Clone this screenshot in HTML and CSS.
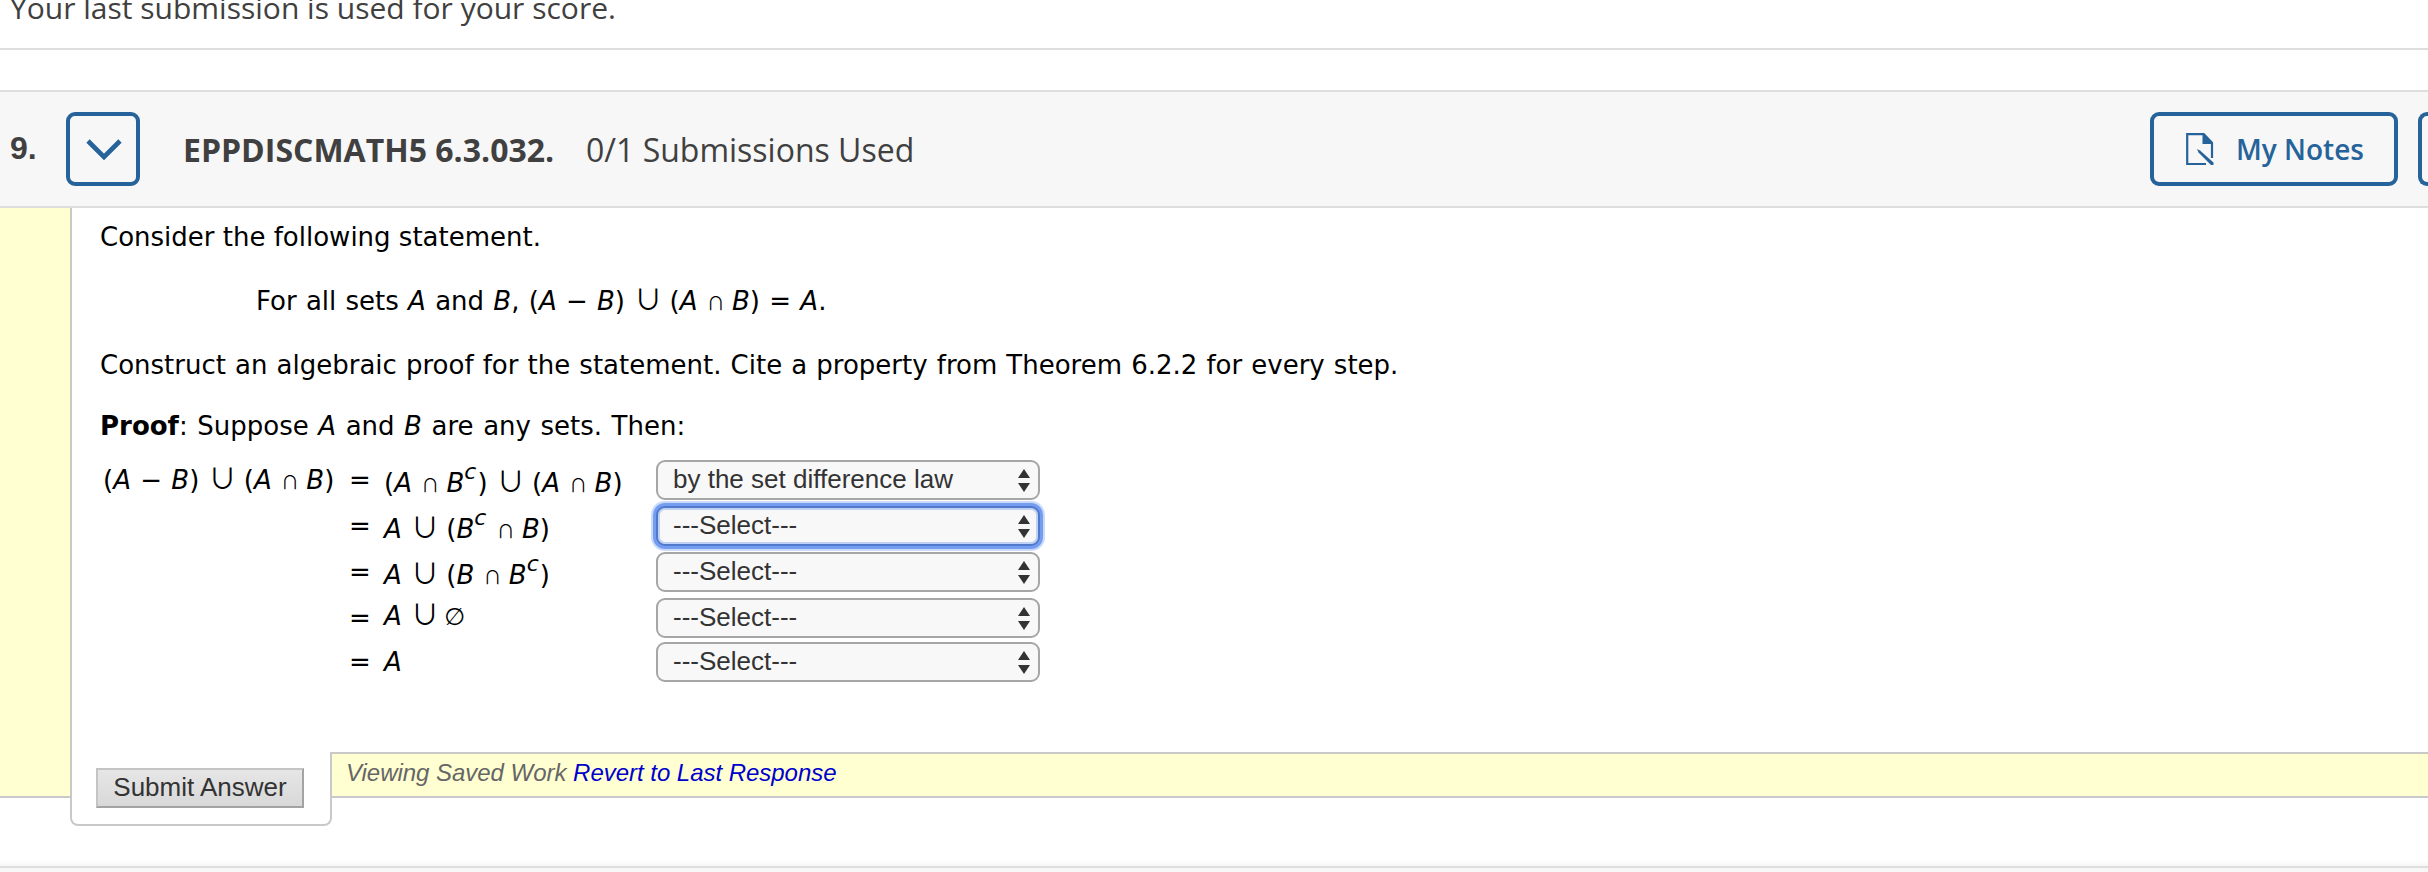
FILE: index.html
```html
<!DOCTYPE html>
<html lang="en">
<head>
  <meta charset="UTF-8">
  <title>Assignment</title>
  <link rel="stylesheet" href="styles.css">
</head>
<body>

  <div class="notice">Your last submission is used for your score.</div>

  <!-- Question header -->
  <header class="question-header">
    <span class="number">9.</span>
    <button class="toggle" aria-label="Collapse">
      <svg width="36" height="22" viewBox="0 0 36 22"><path d="M2 2 L18 18 L34 2" fill="none" stroke="#25639a" stroke-width="4.6"/></svg>
    </button>
    <span class="code">EPPDISCMATH5 6.3.032.</span>
    <span class="used">0/1 Submissions Used</span>
    <div class="actions">
      <button class="notes">
        <svg width="28" height="32" viewBox="0 0 28 32">
          <path d="M20 31 H1.2 V1.2 H17.5 L26 10 V25" fill="none" stroke="#25639a" stroke-width="2.2"/>
          <path d="M16.5 1 V11 H27 V9.5 L18 0Z" fill="#25639a"/>
          <path d="M11 16 L14 17.5 L27.5 29.5 V32 H25 L12.5 19.5Z" fill="#25639a"/>
        </svg>
        <span class="notes-text">My Notes</span>
      </button>
      <button class="next" aria-label="Ask your teacher"></button>
    </div>
  </header>

  <!-- Question body -->
  <main class="question">
    <div class="gutter"></div>
    <div class="content">
      <p class="line l1">Consider the following statement.</p>
      <p class="line l2">For all sets <i>A</i> and <i>B</i>, (<i>A</i> − <i>B</i>) <b class="cup">∪</b> (<i>A</i> <b class="cap">∩</b> <i>B</i>) = <i>A</i>.</p>
      <p class="line l3">Construct an algebraic proof for the statement. Cite a property from Theorem 6.2.2 for every step.</p>
      <p class="line l4"><strong>Proof</strong>: Suppose <i>A</i> and <i>B</i> are any sets. Then:</p>

      <div class="proof">
        <div class="lhs">(<i>A</i> − <i>B</i>) <b class="cup">∪</b> (<i>A</i> <b class="cap">∩</b> <i>B</i>)</div>
        <div class="eq">=</div>
        <div class="rhs sup">(<i>A</i> <b class="cap">∩</b> <i>B<sup>c</sup></i>) <b class="cup">∪</b> (<i>A</i> <b class="cap">∩</b> <i>B</i>)</div>
        <div class="select">by the set difference law<span class="arrows"></span></div>

        <div class="lhs"></div>
        <div class="eq">=</div>
        <div class="rhs sup"><i>A</i> <b class="cup">∪</b> (<i>B<sup>c</sup></i> <b class="cap">∩</b> <i>B</i>)</div>
        <div class="select focused">---Select---<span class="arrows"></span></div>

        <div class="lhs"></div>
        <div class="eq">=</div>
        <div class="rhs sup"><i>A</i> <b class="cup">∪</b> (<i>B</i> <b class="cap">∩</b> <i>B<sup>c</sup></i>)</div>
        <div class="select">---Select---<span class="arrows"></span></div>

        <div class="lhs"></div>
        <div class="eq">=</div>
        <div class="rhs empty"><i>A</i> <b class="cup">∪</b> <span class="null">∅</span></div>
        <div class="select">---Select---<span class="arrows"></span></div>

        <div class="lhs"></div>
        <div class="eq">=</div>
        <div class="rhs"><i>A</i></div>
        <div class="select">---Select---<span class="arrows"></span></div>
      </div>
    </div>
  </main>

  <!-- Submit tab and saved work strip -->
  <div class="bottom">
    <div class="gutter-end"></div>
    <div class="submit-tab"><button class="submit">Submit Answer</button></div>
    <div class="saved">Viewing Saved Work <a>Revert to Last Response</a></div>
  </div>

  <div class="next-question"></div>

</body>
</html>
```
FILE: styles.css
```css
* {
  box-sizing: border-box;
}

body {
  margin: 0;
  height: 872px;
  overflow: hidden;
  background: #fff;
  color: #000;
  font-family: "DejaVu Sans", sans-serif;
  font-size: 26px;
}

button {
  margin: 0;
  padding: 0;
  background: transparent;
  font-family: inherit;
}

.notice {
  height: 50px;
  border-bottom: 2px solid #dedede;
  padding-left: 10px;
  color: #404040;
  font: 30px/15px "Open Sans", sans-serif;
  white-space: nowrap;
}

/* header */
.question-header {
  display: flex;
  align-items: flex-start;
  height: 118px;
  margin-top: 40px;
  padding-top: 20px;
  border-top: 2px solid #dedede;
  border-bottom: 2px solid #dedede;
  background: #f7f7f7;
  color: #404040;
  font: 32px/75px "Open Sans", sans-serif;
  white-space: nowrap;
}

.number {
  width: 56px;
  margin-left: 10px;
  font-family: "Liberation Sans", sans-serif;
  font-weight: bold;
  line-height: 73px;
}

.toggle,
.notes,
.next {
  height: 74px;
  border: 4px solid #25639a;
  border-radius: 9px;
  color: #25639a;
}

.toggle {
  display: flex;
  align-items: center;
  justify-content: center;
  width: 74px;
}

.toggle svg {
  position: relative;
  left: 1px;
  top: 1px;
}

.code {
  width: 403px;
  margin-left: 43px;
  font-weight: bold;
}

.actions {
  display: flex;
  gap: 20px;
  margin-left: auto;
}

.notes {
  display: flex;
  align-items: center;
  width: 248px;
  padding-left: 32px;
  font: 600 28px/60px "Open Sans", sans-serif;
}

.notes-text {
  margin-left: 22px;
}

/* runs off the right side of the page */
.next {
  width: 10px;
  border-right: 0;
  border-radius: 9px 0 0 9px;
}

/* body */
.question {
  display: flex;
  height: 544px;
}

.gutter {
  width: 70px;
  background: #ffffd2;
}

.content {
  flex: 1;
  padding: 13px 0 0 28px;
  border-left: 2px solid #c9c9c9;
  white-space: nowrap;
  word-spacing: 1px;
}

.line {
  height: 32px;
  margin: 0;
  line-height: 32px;
}

.l1 {
  word-spacing: 0;
}

.l2 {
  margin: 32px 0 32px 156px;
}

.l3 {
  word-spacing: 0.85px;
}

.l4 {
  margin-top: 29px;
  word-spacing: 1.3px;
}

.cup,
.cap {
  display: inline-block;
  font-family: "Noto Sans CJK SC", sans-serif;
  font-weight: 400;
  line-height: 0;
  text-align: center;
}

.cup {
  width: 26px;
  font-size: 28px;
}

.cap {
  width: 16px;
  font-size: 18px;
}

/* proof table */
.proof {
  display: grid;
  grid-template-columns: 249px 35px 272px 384px;
  grid-template-rows: 46px 46px 46px 44px 40px;
  margin-top: 18px;
  line-height: 41px;
}

.lhs {
  padding-left: 3px;
}

.sup {
  padding-top: 3px;
}

.empty {
  margin-top: -2px;
}

.null {
  margin-left: -2px;
  font-size: 24px;
  line-height: 0;
}

sup {
  margin: 0 1px 0 0;
  font-size: 22px;
  line-height: 0;
  vertical-align: 13px;
}

.select {
  display: flex;
  justify-content: space-between;
  height: 40px;
  padding: 0 8px 0 15px;
  border: 2px solid #a6a6a6;
  border-radius: 9px;
  background: #f8f8f8;
  color: #333;
  font: 26px/34px "Liberation Sans", sans-serif;
  word-spacing: 0;
}

.focused {
  border-color: #5079cc;
  box-shadow: 0 0 0 3px #749df0, 0 0 0 5px #c9dafa, inset 0 0 0 2px #bfd2f5;
}

.arrows {
  display: flex;
  flex-direction: column;
  gap: 5px;
  padding-top: 7px;
}

.arrows::before,
.arrows::after {
  content: "";
  border: 6px solid transparent;
}

.arrows::before {
  border-top: 0;
  border-bottom: 9px solid #333;
}

.arrows::after {
  border-bottom: 0;
  border-top: 9px solid #333;
}

/* submit area */
.bottom {
  display: flex;
  height: 74px;
}

.gutter-end {
  width: 70px;
  height: 46px;
  border-bottom: 2px solid #c9c9c9;
  background: #ffffd2;
}

.submit-tab {
  width: 262px;
  padding: 16px 0 0 24px;
  border: 2px solid #c9c9c9;
  border-top: 0;
  border-radius: 0 0 8px 8px;
}

.submit {
  display: block;
  width: 208px;
  height: 40px;
  padding-bottom: 2px;
  border: 2px solid;
  border-color: #c4c4c4 #a3a3a3 #a3a3a3 #c4c4c4;
  background: linear-gradient(#e6e6e6, #d8d8d8);
  color: #333;
  font: 26px/34px "Liberation Sans", sans-serif;
}

.saved {
  flex: 1;
  height: 46px;
  margin-left: -2px;
  padding-left: 14px;
  border: 2px solid #c9c9c9;
  border-right: 0;
  background: #ffffd2;
  color: #666;
  font: italic 24px/38px "Liberation Sans", sans-serif;
  letter-spacing: -0.03px;
}

.saved a {
  color: #0000cc;
}

.next-question {
  height: 46px;
  background: linear-gradient(#fff 34px, #f7f7f7 40px, #dedede 40px, #dedede 42px, #f7f7f7 42px);
}
```
